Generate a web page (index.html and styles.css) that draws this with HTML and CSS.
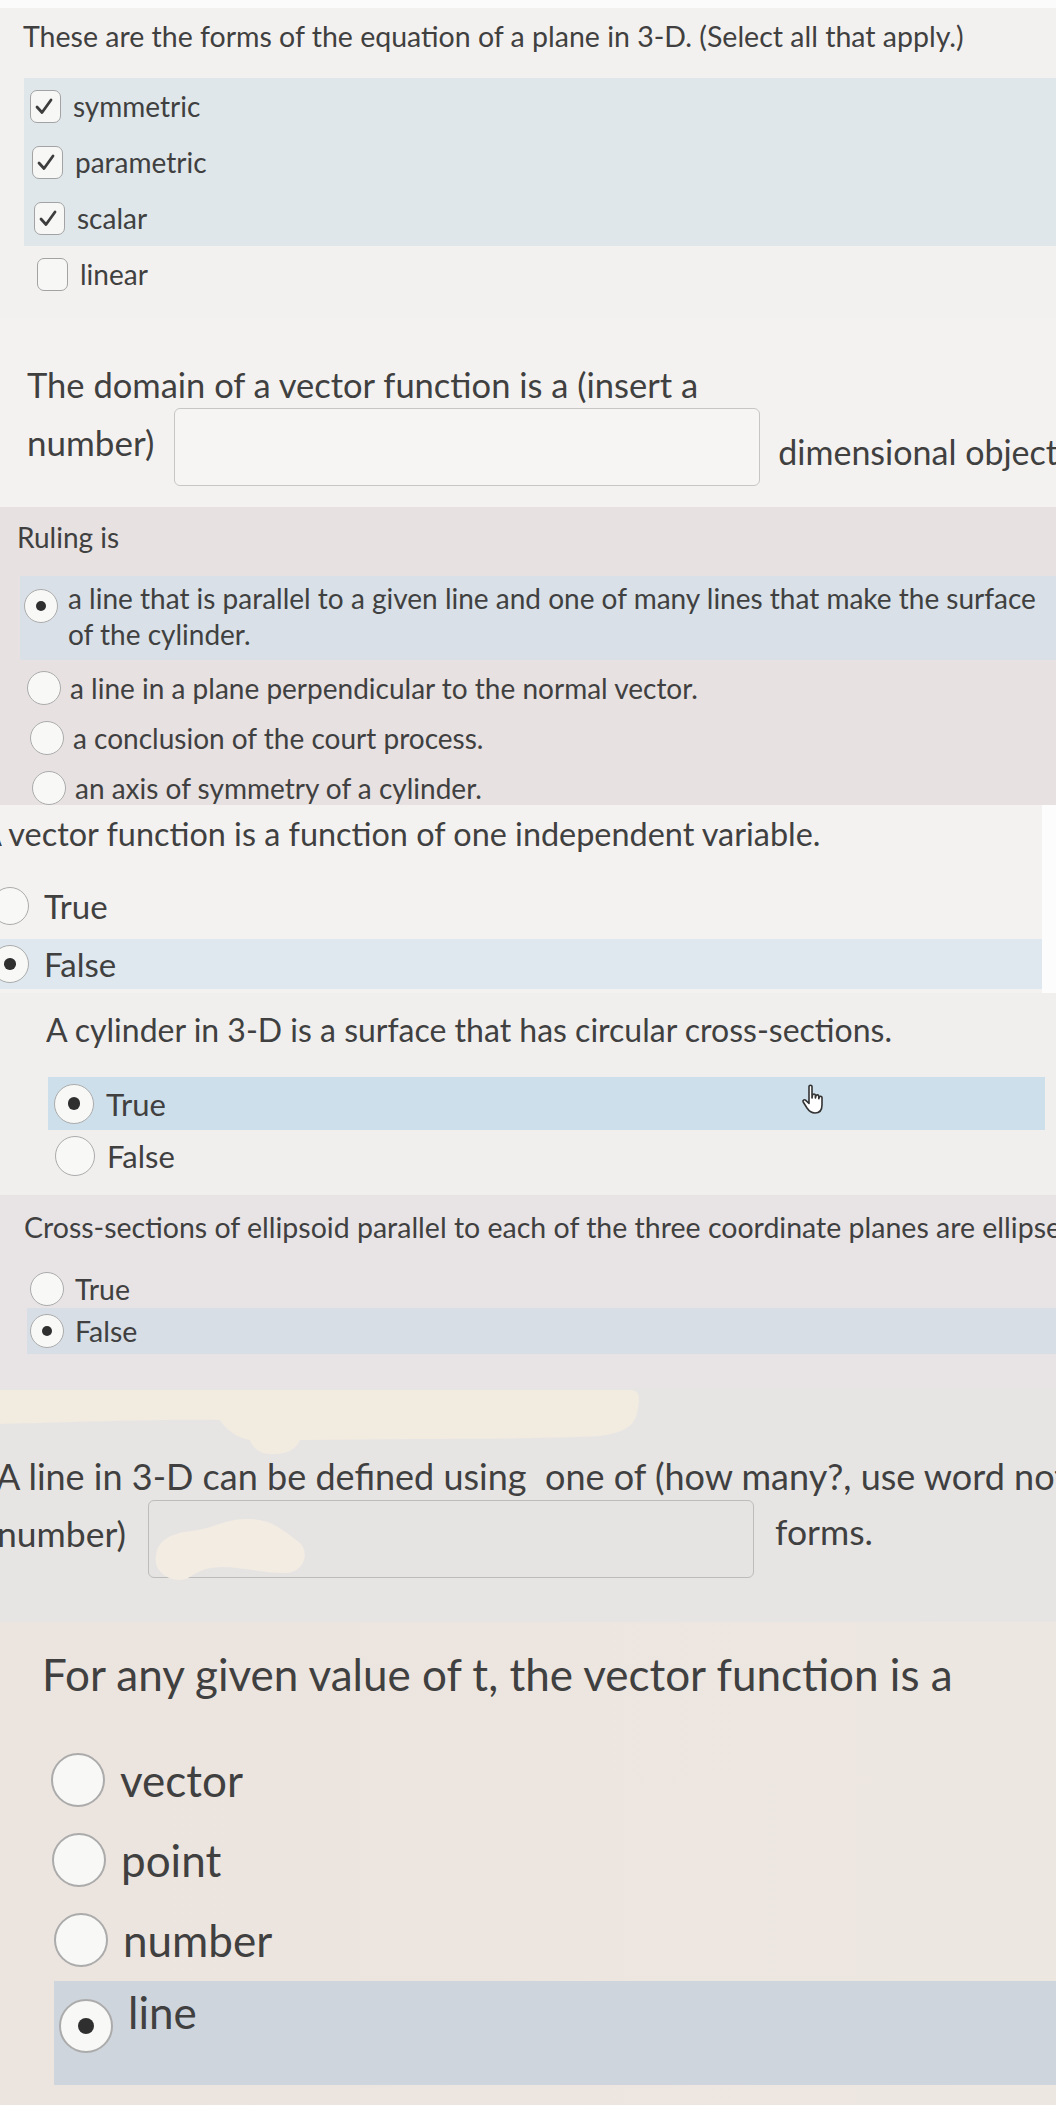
FILE: index.html
```html
<!DOCTYPE html>
<html>
<head>
<meta charset="utf-8">
<link rel="stylesheet" href="styles.css">
</head>
<body>
<main class="page">

<section class="s1">
  <div class="topstrip"></div>
  <p class="q1">These are the forms of the equation of a plane in 3-D. (Select all that apply.)</p>
  <div class="band1">
    <div class="crow r1"><span class="cb"><svg viewBox="0 0 31 33" width="31" height="33"><path d="M7 18 L12 23.5 L21 11" fill="none" stroke="#3d3d3d" stroke-width="2.8" stroke-linecap="round" stroke-linejoin="round"/></svg></span><span>symmetric</span></div>
    <div class="crow r2"><span class="cb"><svg viewBox="0 0 31 33" width="31" height="33"><path d="M7 18 L12 23.5 L21 11" fill="none" stroke="#3d3d3d" stroke-width="2.8" stroke-linecap="round" stroke-linejoin="round"/></svg></span><span>parametric</span></div>
    <div class="crow r3"><span class="cb"><svg viewBox="0 0 31 33" width="31" height="33"><path d="M7 18 L12 23.5 L21 11" fill="none" stroke="#3d3d3d" stroke-width="2.8" stroke-linecap="round" stroke-linejoin="round"/></svg></span><span>scalar</span></div>
  </div>
  <div class="crow r4"><span class="cb"></span><span>linear</span></div>
</section>

<section class="s2">
  <p class="q2">The domain of a vector function is a (insert a</p>
  <div class="fillrow">
    <span class="lbl">number)</span>
    <span class="inp"></span>
    <span class="after">dimensional object</span>
  </div>
</section>

<section class="s3">
  <p class="q3">Ruling is</p>
  <div class="band3">
    <span class="rad sel r33"></span>
    <span class="t3">a line that is parallel to a given line and one of many lines that make the surface<br>of the cylinder.</span>
  </div>
  <div class="orow o2"><span class="rad r33"></span><span>a line in a plane perpendicular to the normal vector.</span></div>
  <div class="orow o3"><span class="rad r33"></span><span>a conclusion of the court process.</span></div>
  <div class="orow o4"><span class="rad r33"></span><span>an axis of symmetry of a cylinder.</span></div>
</section>

<section class="s4">
  <p class="q4">A vector function is a function of one independent variable.</p>
  <div class="row4"><span class="rad r38"></span><span>True</span></div>
  <div class="row4 band4"><span class="rad sel r38"></span><span>False</span></div>
</section>

<section class="s5">
  <p class="q5">A cylinder in 3-D is a surface that has circular cross-sections.</p>
  <div class="row5 band5">
    <span class="rad sel r40"></span><span>True</span>
    <svg class="hand" viewBox="0 0 30 36" width="30" height="36">
      <path d="M9 3.5 C9 1.8 12 1.8 12 3.5 L12 15 L12.5 12 C12.8 10.6 15.2 10.6 15.3 12 L15.4 15 L16 12.8 C16.3 11.5 18.6 11.6 18.7 13 L18.8 15.8 L19.4 14 C19.8 12.9 22 13.2 22 14.6 L22 22 C22 27 19.5 30 15 30 C11 30 9 28 7 25 L3.2 19 C2.3 17.6 4.2 16 5.5 17.2 L9 20.5 Z" fill="#ffffff" stroke="#333333" stroke-width="1.6" stroke-linejoin="round"/>
    </svg>
  </div>
  <div class="row5 f5"><span class="rad r40"></span><span>False</span></div>
</section>

<section class="s6">
  <p class="q6">Cross-sections of ellipsoid parallel to each of the three coordinate planes are ellipses.</p>
  <div class="row6"><span class="rad r34"></span><span>True</span></div>
  <div class="row6 band6"><span class="rad sel r34"></span><span>False</span></div>
</section>

<section class="s7">
  <svg class="blob" viewBox="0 0 640 70" width="640" height="70">
    <path d="M0 2 L630 2 C640 2 640 10 638 20 C636 36 628 44 600 48 C520 52 420 50 300 52 C296 60 290 66 272 66 C258 66 252 58 250 52 C238 50 226 42 220 32 C160 31 80 34 0 36 Z" fill="#f2ebe0"/>
  </svg>
  <p class="q7">A line in 3-D can be defined using&nbsp; one of (how many?, use word not</p>
  <div class="fillrow7">
    <span class="lbl7">number)</span>
    <span class="inp7">
      <svg class="blob2" viewBox="0 0 156 66" width="156" height="66">
        <path d="M4 40 C6 26 18 18 40 16 C60 14 72 4 96 4 C120 4 132 16 148 28 C158 38 152 58 132 58 C110 58 90 52 70 52 C56 52 46 56 38 62 C28 68 14 64 8 56 C4 52 3 46 4 40 Z" fill="#f3ece2"/>
      </svg>
    </span>
    <span class="after7">forms.</span>
  </div>
</section>

<section class="s8">
  <p class="q8">For any given value of t, the vector function is a</p>
  <div class="row8 v1"><span class="rad r52"></span><span>vector</span></div>
  <div class="row8 v2"><span class="rad r52"></span><span>point</span></div>
  <div class="row8 v3"><span class="rad r52"></span><span>number</span></div>
  <div class="row8 band8"><span class="rad sel r52"></span><span class="t8">line</span></div>
</section>

</main>
</body>
</html>
```

FILE: styles.css
```css
* { box-sizing: border-box; }
html, body { margin: 0; padding: 0; }
body {
  width: 1056px;
  font-family: Lato, "Open Sans", "Liberation Sans", sans-serif;
  color: #404040;
  background: #ece5e0;
}
p { margin: 0; }
.page { width: 1056px; overflow: hidden; }
section { overflow: hidden; white-space: nowrap; position: relative; }

/* radios */
.rad {
  flex: none;
  display: inline-flex;
  align-items: center;
  justify-content: center;
  border-radius: 50%;
  border: 1.5px solid #ababab;
  background: #f8f8f7;
}
.rad.sel::after {
  content: "";
  display: block;
  width: 32%;
  height: 32%;
  border-radius: 50%;
  background: #2f2f2f;
}
.r33 { width: 34px; height: 34px; }
.r34 { width: 34px; height: 34px; }
.r38 { width: 38px; height: 38px; }
.r40 { width: 40px; height: 40px; }
.r52 { width: 54px; height: 54px; border-width: 2px; }

/* section 1 */
.s1 { height: 318px; background: #f3f1ef; }
.topstrip { height: 8px; background: #fbfbfb; }
.q1 { margin-top: 11px; padding-left: 23px; font-size: 28.5px; line-height: 34px; }
.band1 { margin-top: 25px; margin-left: 24px; height: 168px; background: #dfe7ea; }
.crow { display: flex; align-items: center; height: 56px; font-size: 28px; gap: 12px; }
.cb {
  flex: none;
  width: 31px; height: 33px;
  border: 1.5px solid #a3a3a3;
  border-radius: 7px;
  background: #f7f7f6;
  display: flex;
}
.cb svg { margin: -1.5px; }
.r1 { padding-left: 6px; }
.r2 { padding-left: 8px; }
.r3 { padding-left: 10px; }
.r4 { padding-left: 37px; }

/* section 2 */
.s2 { height: 189px; background: #f4f2f0; padding-top: 47px; padding-left: 27px; }
.q2 { font-size: 34.5px; line-height: 40px; }
.fillrow { display: flex; align-items: flex-start; margin-top: 3px; font-size: 35px; line-height: 40px; }
.lbl { margin-top: 14px; }
.inp {
  flex: none;
  margin-left: 20px;
  width: 586px; height: 78px;
  border: 1.5px solid #c6c6c4;
  border-radius: 6px;
  background: #f6f5f3;
}
.after { margin-left: 18px; margin-top: 24px; font-size: 34px; }

/* section 3 */
.s3 { height: 298px; background: #e7e1e2; padding-top: 14px; }
.q3 { padding-left: 17px; font-size: 28px; line-height: 32px; }
.band3 {
  margin-top: 23px; margin-left: 20px; height: 84px;
  background: #d9e0e7;
  display: flex; align-items: flex-start;
  padding-left: 4px;
  font-size: 28px; line-height: 36px;
}
.band3 .rad { margin-top: 13px; }
.t3 { margin-left: 10px; margin-top: 4px; }
.orow { display: flex; align-items: center; height: 50px; font-size: 28px; gap: 9px; }
.o2 { margin-top: 3px; padding-left: 27px; }
.o3 { padding-left: 30px; }
.o4 { padding-left: 32px; }

/* section 4 */
.s4 {
  height: 188px;
  background: linear-gradient(to right, #f3f2f0 1042px, #fcfcfc 1042px);
  padding-top: 10px;
}
.q4 { font-size: 32.4px; line-height: 38px; text-indent: -20px; }
.row4 { display: flex; align-items: center; height: 44px; font-size: 33px; margin-right: 14px; }
.row4 .rad { margin-left: -9px; margin-right: 15px; }
.s4 .row4:first-of-type { margin-top: 31px; }
.band4 { margin-top: 11px; height: 50px; background: #dfe8ee; }

/* section 5 */
.s5 { height: 202px; background: #f0efee; padding-top: 18px; }
.q5 { padding-left: 46px; font-size: 32px; line-height: 38px; }
.row5 { display: flex; align-items: center; font-size: 31px; gap: 12px; position: relative; }
.band5 { margin-top: 28px; margin-left: 48px; margin-right: 11px; height: 53px; padding-left: 6px; background: #cddfea; }
.f5 { margin-top: 3px; height: 46px; padding-left: 55px; }
.hand { position: absolute; left: 752px; top: 6px; }

/* section 6 */
.s6 { height: 193px; background: #e8e4e6; padding-top: 15px; }
.q6 { padding-left: 24px; font-size: 28.5px; line-height: 34px; }
.row6 { display: flex; align-items: center; height: 38px; font-size: 28.5px; gap: 11px; padding-left: 30px; }
.s6 .row6:first-of-type { margin-top: 26px; }
.band6 { height: 46px; margin-left: 27px; padding-left: 3px; background: #d7dee6; }

/* section 7 */
.s7 { height: 234px; background: #e7e5e4; padding-top: 67px; }
.blob { position: absolute; left: 0; top: 0; }
.q7 { font-size: 36px; line-height: 42px; text-indent: -4px; }
.fillrow7 { display: flex; align-items: flex-start; margin-top: 3px; font-size: 35.5px; line-height: 42px; }
.lbl7 { margin-left: -3px; margin-top: 13px; }
.inp7 {
  flex: none; position: relative;
  margin-left: 22px;
  width: 606px; height: 78px;
  border: 1.5px solid #bdbcba;
  border-radius: 6px;
  background: #e6e4e3;
}
.blob2 { position: absolute; left: 3px; top: 14px; }
.after7 { margin-left: 21px; margin-top: 11px; }

/* section 8 */
.s8 { height: 483px; background: linear-gradient(to right, #ece4de, #ede7e2); padding-top: 26px; }
.q8 { padding-left: 42px; font-size: 44px; line-height: 52px; }
.row8 { display: flex; align-items: center; height: 80px; font-size: 44px; gap: 15px; }
.v1 { margin-top: 40px; padding-left: 51px; }
.v2 { padding-left: 52px; }
.v3 { padding-left: 54px; }
.band8 {
  margin-top: 1px; margin-left: 54px;
  height: 104px;
  align-items: flex-start;
  padding-left: 5px;
  background: #cfd5dc;
}
.band8 .rad { margin-top: 18px; }
.t8 { margin-top: 5px; line-height: 52px; }
```
